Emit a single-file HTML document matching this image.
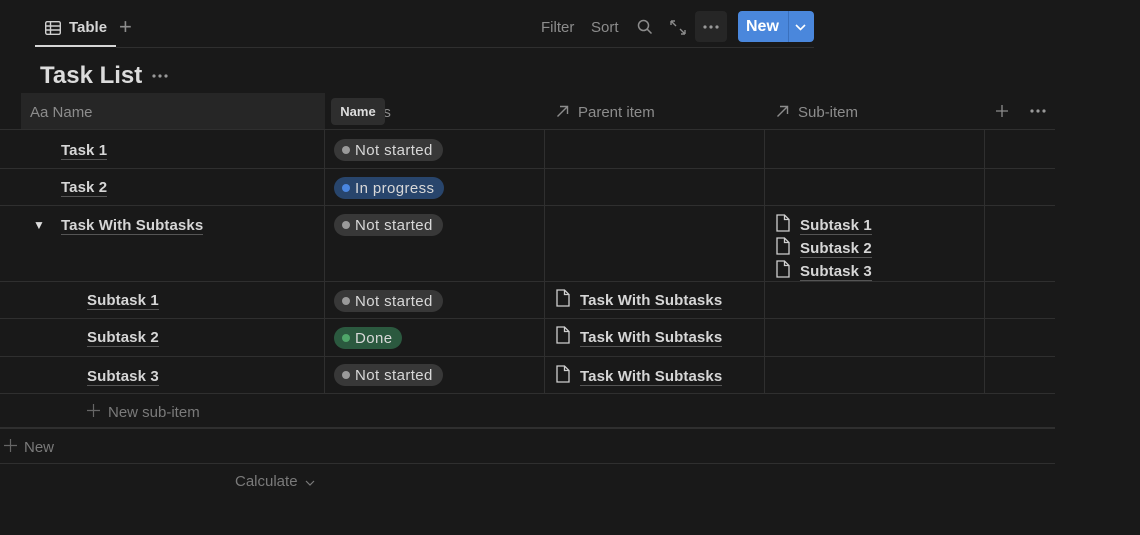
<!DOCTYPE html>
<html><head><meta charset="utf-8"><style>
*{margin:0;padding:0;box-sizing:border-box}
body{width:1140px;height:535px;background:#191919;font-family:"Liberation Sans",sans-serif;color:#d4d4d4;position:relative;overflow:hidden}
.a{position:absolute}
.hl{position:absolute;height:1px;background:#2f2f2f}
.vl{position:absolute;width:1px;background:#2f2f2f}
.nm{position:absolute;font-size:15px;font-weight:bold;color:#d6d6d6;border-bottom:1px solid #555;line-height:17px;letter-spacing:0.1px;margin-top:2px}
.pill{position:absolute;height:22px;border-radius:11px;font-size:15px;line-height:24px;padding:0 10px 0 21px;color:#d8d8d8;letter-spacing:0.4px}
.pill:before{content:"";position:absolute;left:8px;top:7px;width:8px;height:8px;border-radius:50%;background:var(--d)}
.gray{background:#383838;--d:#9a9a9a}
.blue{background:#28456c;--d:#4a86e0}
.green{background:#2b593f;--d:#4fa569}
.hd{position:absolute;font-size:15px;color:#8c8c8c;top:104px}
.doc{position:absolute;width:14px;height:18px}
.dots{position:absolute;width:18px;height:4px}
</style></head><body>
<svg width="0" height="0" style="position:absolute"><defs>
<symbol id="d" viewBox="0 0 14 18"><path d="M1 1H8.5L13 5.5V17H1Z M8.5 1V5.5H13" fill="none" stroke="#cfcfcf" stroke-width="1.3"/></symbol>
<symbol id="dt" viewBox="0 0 18 4"><circle cx="3" cy="2" r="1.6" fill="#999"/><circle cx="9" cy="2" r="1.6" fill="#999"/><circle cx="15" cy="2" r="1.6" fill="#999"/></symbol>
</defs></svg>
<!-- top tabs -->
<svg class="a" style="left:45px;top:21px" width="16" height="14" viewBox="0 0 16 14"><rect x="0.7" y="0.7" width="14.6" height="12.6" rx="1.5" fill="none" stroke="#d0d0d0" stroke-width="1.4"/><path d="M1 5H15M1 9H15M5.5 1V13" stroke="#d0d0d0" stroke-width="1.4"/></svg>
<div class="a" style="left:69px;top:19px;font-size:15px;font-weight:bold;color:#d6d6d6">Table</div>
<div class="a" style="left:119px;top:14px;font-size:22px;color:#8c8c8c;font-weight:300">+</div>
<div class="a" style="left:35px;top:45px;width:81px;height:2px;background:#d6d6d6"></div>
<div class="hl" style="left:116px;top:47px;width:698px"></div>
<div class="a" style="left:541px;top:19px;font-size:15px;color:#8c8c8c">Filter</div>
<div class="a" style="left:591px;top:19px;font-size:15px;color:#8c8c8c">Sort</div>
<svg class="a" style="left:637px;top:19px" width="16" height="16" viewBox="0 0 16 16"><circle cx="6.5" cy="6.5" r="5" fill="none" stroke="#8c8c8c" stroke-width="1.5"/><path d="M10.2 10.2L14.5 14.5" stroke="#8c8c8c" stroke-width="1.5"/></svg>
<svg class="a" style="left:670px;top:20px" width="16" height="15" viewBox="0 0 16 15"><path d="M1 1L6 6M1 1V5M1 1H5M15 14L10 9M15 14V10M15 14H11" stroke="#8c8c8c" stroke-width="1.4" fill="none"/></svg>
<div class="a" style="left:695px;top:11px;width:32px;height:31px;background:#262626;border-radius:4px"></div>
<svg class="dots" style="left:702px;top:25px"><use href="#dt"/></svg>
<div class="a" style="left:738px;top:11px;width:76px;height:31px;background:#4a87dc;border-radius:4px"></div>
<div class="a" style="left:746px;top:18px;font-size:16px;font-weight:bold;color:#fff">New</div>
<div class="a" style="left:788px;top:11px;width:1px;height:31px;background:#3a70bd"></div>
<svg class="a" style="left:795px;top:24px" width="11" height="7" viewBox="0 0 11 7"><path d="M1 1L5.5 5.5L10 1" stroke="#fff" stroke-width="1.6" fill="none"/></svg>
<!-- title -->
<div class="a" style="left:40px;top:62px;font-size:24px;font-weight:bold;color:#dcdcdc">Task List</div>
<svg class="dots" style="left:151px;top:74px"><use href="#dt"/></svg>
<!-- header -->
<div class="a" style="left:21px;top:93px;width:304px;height:36px;background:#262626"></div>
<div class="hd" style="left:30px">Aa Name</div>
<div class="hd" style="left:375px">us</div>
<div class="a" style="left:331px;top:98px;width:54px;height:27px;background:#2e2e2e;border-radius:4px;font-size:13px;font-weight:bold;color:#ddd;text-align:center;line-height:27px">Name</div>
<svg class="a" style="left:556px;top:105px" width="13" height="13" viewBox="0 0 13 13"><path d="M1.5 11.5L11 2M4 1.5H11.5V9" stroke="#8c8c8c" stroke-width="1.4" fill="none"/></svg>
<div class="hd" style="left:578px">Parent item</div>
<svg class="a" style="left:776px;top:105px" width="13" height="13" viewBox="0 0 13 13"><path d="M1.5 11.5L11 2M4 1.5H11.5V9" stroke="#8c8c8c" stroke-width="1.4" fill="none"/></svg>
<div class="hd" style="left:798px">Sub-item</div>
<svg class="a" style="left:995px;top:104px" width="14" height="14" viewBox="0 0 14 14"><path d="M7 1V13M1 7H13" stroke="#8c8c8c" stroke-width="1.3"/></svg>
<svg class="dots" style="left:1029px;top:109px"><use href="#dt"/></svg>
<!-- grid lines -->
<div class="hl" style="left:0;top:129px;width:1055px"></div>
<div class="hl" style="left:0;top:168px;width:1055px"></div>
<div class="hl" style="left:0;top:205px;width:1055px"></div>
<div class="hl" style="left:0;top:281px;width:1055px"></div>
<div class="hl" style="left:0;top:318px;width:1055px"></div>
<div class="hl" style="left:0;top:356px;width:1055px"></div>
<div class="hl" style="left:0;top:393px;width:1055px"></div>
<div class="hl" style="left:0;top:427px;width:1055px;height:2px"></div>
<div class="hl" style="left:0;top:463px;width:1055px"></div>
<div class="vl" style="left:324px;top:130px;height:263px"></div>
<div class="vl" style="left:544px;top:130px;height:263px"></div>
<div class="vl" style="left:764px;top:130px;height:263px"></div>
<div class="vl" style="left:984px;top:130px;height:263px"></div>
<!-- rows -->
<div class="nm" style="left:61px;top:140px">Task 1</div>
<div class="nm" style="left:61px;top:177px">Task 2</div>
<div class="a" style="left:33px;top:218px;font-size:12px;color:#ddd">▼</div>
<div class="nm" style="left:61px;top:215px">Task With Subtasks</div>
<div class="nm" style="left:87px;top:290px">Subtask 1</div>
<div class="nm" style="left:87px;top:327px">Subtask 2</div>
<div class="nm" style="left:87px;top:366px">Subtask 3</div>
<div class="pill gray" style="left:334px;top:139px">Not started</div>
<div class="pill blue" style="left:334px;top:177px">In progress</div>
<div class="pill gray" style="left:334px;top:214px">Not started</div>
<div class="pill gray" style="left:334px;top:290px">Not started</div>
<div class="pill green" style="left:334px;top:327px">Done</div>
<div class="pill gray" style="left:334px;top:364px">Not started</div>
<!-- docs -->
<svg class="doc" style="left:776px;top:214px" viewBox="0 0 14 18"><use href="#d"/></svg>
<div class="nm" style="left:800px;top:215px">Subtask 1</div>
<svg class="doc" style="left:776px;top:237px" viewBox="0 0 14 18"><use href="#d"/></svg>
<div class="nm" style="left:800px;top:238px">Subtask 2</div>
<svg class="doc" style="left:776px;top:260px" viewBox="0 0 14 18"><use href="#d"/></svg>
<div class="nm" style="left:800px;top:261px">Subtask 3</div>
<svg class="doc" style="left:556px;top:289px" viewBox="0 0 14 18"><use href="#d"/></svg>
<div class="nm" style="left:580px;top:290px">Task With Subtasks</div>
<svg class="doc" style="left:556px;top:326px" viewBox="0 0 14 18"><use href="#d"/></svg>
<div class="nm" style="left:580px;top:327px">Task With Subtasks</div>
<svg class="doc" style="left:556px;top:365px" viewBox="0 0 14 18"><use href="#d"/></svg>
<div class="nm" style="left:580px;top:366px">Task With Subtasks</div>
<!-- footer -->
<svg class="a" style="left:87px;top:404px" width="13" height="13" viewBox="0 0 13 13"><path d="M6.5 0V13M0 6.5H13" stroke="#666" stroke-width="1.2"/></svg>
<div class="a" style="left:108px;top:404px;font-size:15px;color:#7a7a7a">New sub-item</div>
<svg class="a" style="left:4px;top:439px" width="13" height="13" viewBox="0 0 13 13"><path d="M6.5 0V13M0 6.5H13" stroke="#666" stroke-width="1.2"/></svg>
<div class="a" style="left:24px;top:439px;font-size:15px;color:#7a7a7a">New</div>
<div class="a" style="left:235px;top:473px;font-size:15px;color:#7a7a7a">Calculate</div>
<svg class="a" style="left:305px;top:480px" width="10" height="6" viewBox="0 0 10 6"><path d="M1 1L5 5L9 1" stroke="#7a7a7a" stroke-width="1.2" fill="none"/></svg>
</body></html>
